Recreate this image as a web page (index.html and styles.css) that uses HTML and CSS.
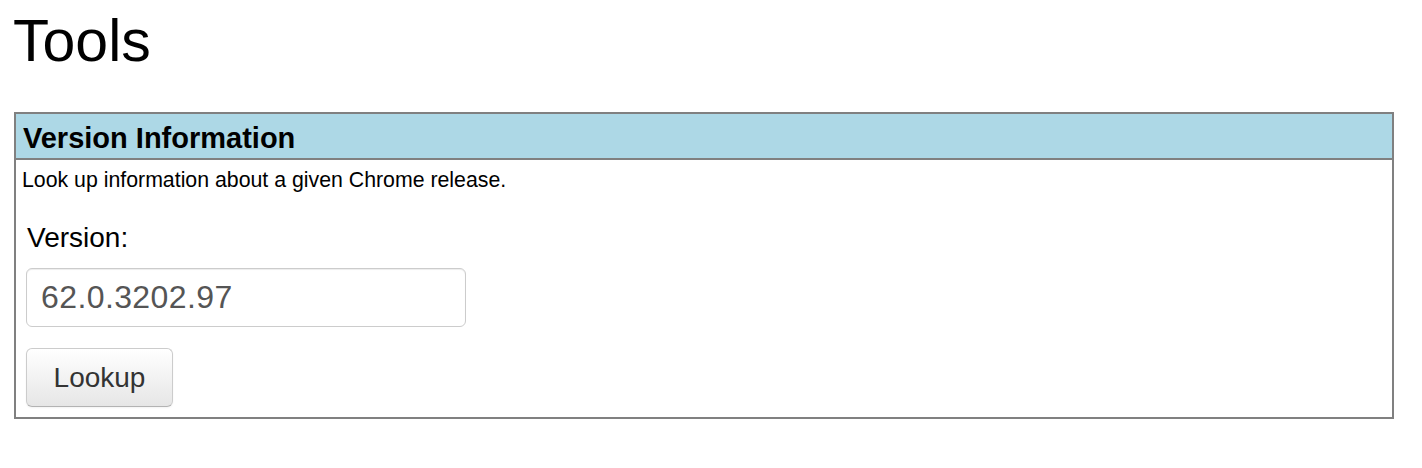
FILE: index.html
```html
<!DOCTYPE html>
<html lang="en">
<head>
<meta charset="utf-8">
<title>Tools</title>
<link rel="stylesheet" href="styles.css">
</head>
<body>
<h1 class="page-title">Tools</h1>
<section class="panel">
  <h2 class="panel-header">Version Information</h2>
  <div class="panel-body">
    <p class="panel-desc">Look up information about a given Chrome release.</p>
    <form class="lookup-form" onsubmit="return false;">
      <label class="field-label" for="version">Version:</label>
      <input class="field-input" id="version" type="text" value="62.0.3202.97">
      <button class="btn" type="submit">Lookup</button>
    </form>
  </div>
</section>
</body>
</html>
```

FILE: styles.css
```css
html, body {
  margin: 0;
  padding: 0;
  background: #fff;
}
body {
  padding: 0 28px 0 14px;
  font-family: "Liberation Sans", Arial, Helvetica, sans-serif;
  color: #000;
}
.page-title {
  margin: 12px 0 41px -1px;
  font-size: 59px;
  line-height: 59px;
  font-weight: normal;
}
.panel {
  border: 2px solid #808080;
}
.panel-header {
  margin: 0;
  background: #add8e6;
  border-bottom: 2px solid #808080;
  padding: 4px 0 0 7px;
  height: 40px;
  font-size: 29px;
  line-height: 40px;
  font-weight: bold;
}
.panel-body {
  padding: 8px 4px 10px 6px;
}
.panel-desc {
  margin: 0;
  font-size: 21.3px;
  line-height: 24px;
}
.lookup-form {
  display: flex;
  flex-direction: column;
  align-items: flex-start;
  padding-left: 4px;
  margin-top: 30px;
}
.field-label {
  margin-left: 1px;
  font-size: 28px;
  line-height: 32px;
}
.field-input {
  box-sizing: border-box;
  margin-top: 14px;
  width: 440px;
  height: 59px;
  padding: 0 14px;
  border: 1px solid #cccccc;
  border-radius: 6px;
  box-shadow: inset 0 1px 1px rgba(0,0,0,0.075);
  font-family: "Liberation Sans", Arial, Helvetica, sans-serif;
  font-size: 32px;
  color: #555555;
  letter-spacing: 0.4px;
  outline: none;
}
.btn {
  box-sizing: border-box;
  margin-top: 21px;
  width: 147px;
  height: 59px;
  padding: 0;
  border: 1px solid #cccccc;
  border-bottom-color: #b3b3b3;
  border-radius: 6px;
  background: linear-gradient(to bottom, #ffffff, #e6e6e6);
  box-shadow: inset 0 1px 0 rgba(255,255,255,0.2), 0 1px 2px rgba(0,0,0,0.05);
  font-family: "Liberation Sans", Arial, Helvetica, sans-serif;
  font-size: 28px;
  color: #333333;
  cursor: pointer;
}
```
